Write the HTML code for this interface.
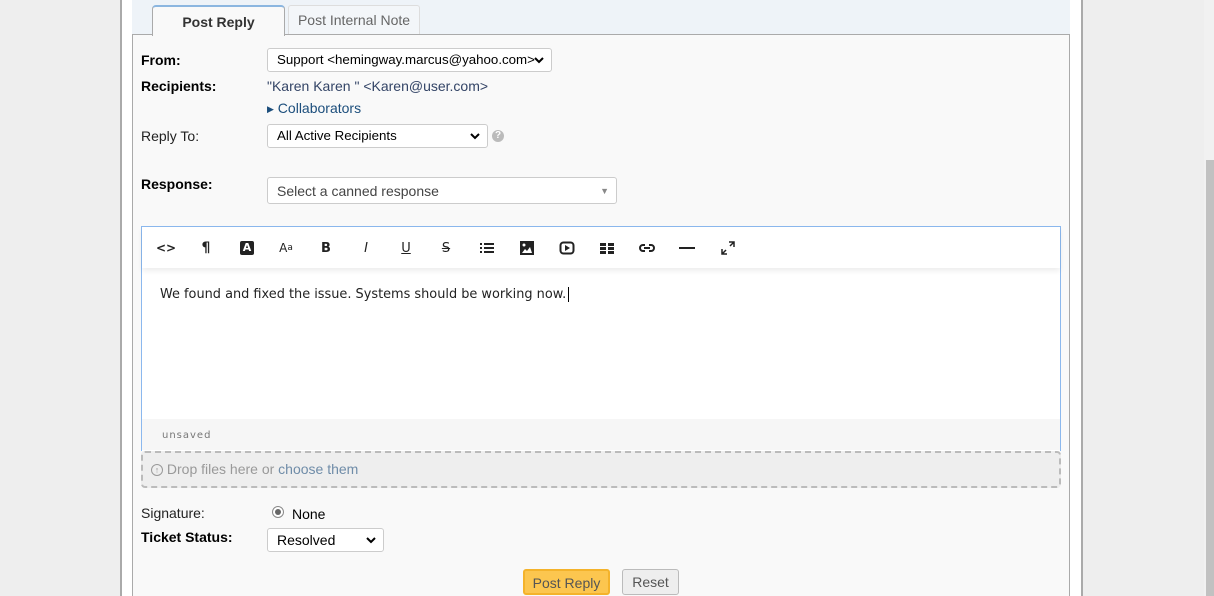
<!DOCTYPE html>
<html><head><style>
html,body{margin:0;overflow:hidden}
body{width:1214px;height:596px;background:#eee;font-family:"Liberation Sans",Arial,sans-serif;font-size:14px;position:relative;color:#000}
.abs{position:absolute}
.page{left:120px;top:0;width:959px;height:596px;background:#fff;border-left:2px solid #aaa;border-right:2px solid #aaa}
.tabbar{left:132px;top:0;width:938px;height:35px;background:#eef3f8}
.panel{left:132px;top:34px;width:936px;height:570px;background:#f9f9f9;border:1px solid #aaa}
.tab{top:5px;height:30px;box-sizing:border-box;font-size:14px;text-align:center;line-height:30px}
.sel{background:#fff;border:1px solid #ccc;border-radius:3px;box-sizing:border-box;height:24px;font-size:14px;padding-left:9px;line-height:22px}
.chev{position:absolute;right:6px;top:5px}
.lbl{left:141px;font-size:14px}
.b{font-weight:bold}
.ic{position:absolute;top:240px;width:16px;height:16px;display:flex;align-items:center;justify-content:center;font-family:"DejaVu Sans",sans-serif;color:#222}
.btn{box-sizing:border-box;height:26px;font-size:14px;text-align:center;line-height:24px;border-radius:3px}
</style></head><body>
<div class="abs page"></div>
<div class="abs tabbar"></div>
<div class="abs panel"></div>
<div class="abs tab" style="left:152px;width:133px;background:#f9f9f9;border:1px solid #aaa;border-bottom:none;border-top:2px solid #8bb6e0;border-radius:4px 4px 0 0;font-weight:bold;color:#333;height:31px;line-height:30px">Post Reply</div>
<div class="abs tab" style="left:288px;width:132px;border:1px solid #ddd;border-bottom:none;border-radius:3px 3px 0 0;color:#666;height:29px;line-height:28px;background:#f3f6f9">Post Internal Note</div>

<div class="abs lbl b" style="top:52px">From:</div>
<div class="abs sel" style="left:267px;top:48px;width:285px;font-size:13.3px">Support &lt;hemingway.marcus@yahoo.com&gt;<svg class="chev" width="12" height="12" viewBox="0 0 12 12"><path d="M2 4l4 4 4-4" stroke="#000" stroke-width="2" fill="none"/></svg></div>
<div class="abs lbl b" style="top:78px">Recipients:</div>
<div class="abs" style="left:267px;top:78px;color:#346;font-size:14px">"Karen Karen " &lt;Karen@user.com&gt;</div>
<div class="abs" style="left:267px;top:100px;color:#1c4e7c;font-size:14px"><span style="font-size:9px;vertical-align:1px">&#9654;</span> Collaborators</div>
<div class="abs lbl" style="top:128px;color:#222">Reply To:</div>
<div class="abs sel" style="left:267px;top:124px;width:221px;font-size:13.3px">All Active Recipients<svg class="chev" width="12" height="12" viewBox="0 0 12 12"><path d="M2 4l4 4 4-4" stroke="#000" stroke-width="2" fill="none"/></svg></div>
<div class="abs" style="left:492px;top:130px;width:12px;height:12px;border-radius:50%;background:#bbb;color:#fff;font-size:10px;font-weight:bold;text-align:center;line-height:12px">?</div>
<div class="abs lbl b" style="top:176px">Response:</div>
<div class="abs sel" style="left:267px;top:177px;width:350px;height:27px;line-height:26px;color:#444">Select a canned response<span style="position:absolute;right:7px;top:0;font-size:9px;color:#888">&#9660;</span></div>

<div class="abs" style="left:141px;top:226px;width:918px;height:224px;border:1px solid #8bb8ee;border-bottom:none;background:#fff"></div>
<div class="abs" style="left:142px;top:227px;width:918px;height:41px;background:#fff;box-shadow:0 3px 5px rgba(0,0,0,0.07)"></div>
<div class="ic" style="left:158px;font-size:12px;font-weight:bold">&lt;&gt;</div>
<div class="ic" style="left:198px;font-size:14px;font-weight:bold">¶</div>
<div class="ic" style="left:239px"><span style="background:#222;color:#fff;width:14px;height:14px;font-size:11px;font-weight:bold;text-align:center;line-height:14px;border-radius:2px;display:block">A</span></div>
<div class="ic" style="left:278px;font-size:12px">A<span style="font-size:9px">a</span></div>
<div class="ic" style="left:318px;font-size:13px;font-weight:bold">B</div>
<div class="ic" style="left:358px;font-size:13px;font-style:italic">I</div>
<div class="ic" style="left:398px;font-size:13px;text-decoration:underline">U</div>
<div class="ic" style="left:438px;font-size:13px;text-decoration:line-through">S</div>
<svg class="ic" style="left:479px" viewBox="0 0 16 16"><path d="M1 3h2v2H1zM5 3h10v2H5zM1 7h2v2H1zM5 7h10v2H5zM1 11h2v2H1zM5 11h10v2H5z" fill="#222"/></svg>
<svg class="ic" style="left:519px" viewBox="0 0 16 16"><rect x="1" y="1" width="14" height="14" fill="#222"/><path d="M3 13l3-4 2 2 3-4 2 6z" fill="#fff"/><circle cx="5" cy="5" r="1.5" fill="#fff"/></svg>
<svg class="ic" style="left:559px" viewBox="0 0 16 16"><rect x="1.5" y="2.5" width="13" height="11" rx="3" fill="none" stroke="#222" stroke-width="2"/><path d="M6 5v6l5-3z" fill="#222"/></svg>
<svg class="ic" style="left:599px" viewBox="0 0 16 16"><path d="M1 3h6v3H1zM9 3h6v3H9zM1 7h6v3H1zM9 7h6v3H9zM1 11h6v3H1zM9 11h6v3H9z" fill="#222"/></svg>
<svg class="ic" style="left:639px" viewBox="0 0 16 16"><path d="M6 5H4a3 3 0 000 6h2M10 5h2a3 3 0 010 6h-2M5 8h6" fill="none" stroke="#222" stroke-width="2"/></svg>
<svg class="ic" style="left:679px" viewBox="0 0 16 16"><path d="M0 8h16" stroke="#222" stroke-width="2"/></svg>
<svg class="ic" style="left:720px" viewBox="0 0 16 16"><path d="M9 2h5v5M14 2l-4 4M7 14H2V9M2 14l4-4" fill="none" stroke="#222" stroke-width="1.5"/></svg>
<div class="abs" style="left:160px;top:287px;font-family:'DejaVu Sans',sans-serif;font-size:12.9px;color:#222">We found and fixed the issue. Systems should be working now. <span style="border-left:1px solid #000;margin-left:2px"> </span></div>
<div class="abs" style="left:142px;top:419px;width:918px;height:31px;background:#f6f6f6"></div>
<div class="abs" style="left:162px;top:430px;font-size:10px;color:#777;letter-spacing:1px;font-family:'DejaVu Sans',sans-serif">unsaved</div>
<div class="abs" style="left:141px;top:451px;width:916px;height:33px;background:#eee;border:2px dashed #bbb;border-radius:4px"></div>
<div class="abs" style="left:151px;top:461px;color:#999;font-size:14px"><span style="display:inline-block;width:10px;height:10px;border:1.5px solid #999;border-radius:50%;font-size:9px;line-height:10px;text-align:center;vertical-align:1px">↑</span> Drop files here or <span style="color:#6f8ca8">choose them</span></div>

<div class="abs lbl" style="top:505px;color:#222">Signature:</div>
<div class="abs" style="left:272px;top:506px;width:10px;height:10px;border-radius:50%;border:1px solid #888;background:#fff"><div style="width:6px;height:6px;margin:2px;border-radius:50%;background:#666"></div></div>
<div class="abs" style="left:292px;top:506px;font-size:14px">None</div>
<div class="abs lbl b" style="top:529px">Ticket Status:</div>
<div class="abs sel" style="left:267px;top:528px;width:117px">Resolved<svg class="chev" width="12" height="12" viewBox="0 0 12 12"><path d="M2 4l4 4 4-4" stroke="#000" stroke-width="2" fill="none"/></svg></div>
<div class="abs btn" style="left:523px;top:569px;width:87px;background:#fcc64f;border:2px solid #f4b32b;color:#555">Post Reply</div>
<div class="abs btn" style="left:622px;top:569px;width:57px;background:#eee;border:1px solid #bbb;color:#555">Reset</div>

<div class="abs" style="left:1204px;top:0;width:10px;height:596px;background:#f1f1f1"></div>
<div class="abs" style="left:1206px;top:160px;width:8px;height:436px;background:#c1c1c1"></div>
</body></html>
